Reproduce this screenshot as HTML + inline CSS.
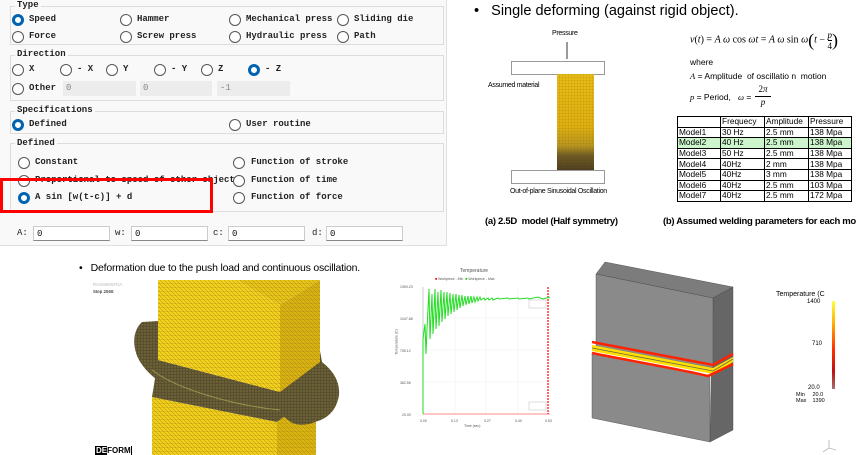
<!DOCTYPE html>
<html><head><meta charset="utf-8">
<style>
*{margin:0;padding:0;box-sizing:border-box}
body{width:856px;height:455px;position:relative;overflow:hidden;background:#fff;font-family:"Liberation Sans",sans-serif}
.a{position:absolute;white-space:nowrap}
#dlg{position:absolute;left:0;top:0;width:447px;height:246px;background:#f9f9f9;border-right:1px solid #e0e0e0;border-bottom:1px solid #e0e0e0}
.g{position:absolute;border:1px solid #dcdcdc}
.m{font-family:"Liberation Mono",monospace;font-size:9px;color:#222;position:absolute;white-space:nowrap;line-height:11px;font-weight:bold}
.lg{background:#f9f9f9;padding:0 2px}
.r{position:absolute;width:12px;height:12px;border:1px solid #555;border-radius:50%;background:#fff}
.r.s{border:3.5px solid #0063b1}
.in{position:absolute;height:15px;background:#fff;border:1px solid #ccc;border-bottom:1px solid #888;font-family:"Liberation Mono",monospace;font-size:9px;padding:2px 3px;color:#111}
.in.d{background:#ececec;border:none;color:#888}
table{border-collapse:collapse;position:absolute;left:677px;top:116px;width:175px;font-size:8.3px}
td{border:1px solid #000;height:10.6px;line-height:9px;padding:0 1px}
.eq{font-family:"Liberation Serif",serif;font-size:10px}
.fr{display:inline-block;vertical-align:middle;text-align:center;font-family:"Liberation Serif",serif;font-size:9px;line-height:10px}
.fr span{display:block}
.fr span+span{border-top:1px solid #000}
</style></head><body>
<div id="dlg">
 <div class="g" style="left:10px;top:6px;width:434px;height:39px"></div>
 <div class="m lg" style="left:15px;top:0px">Type</div>
 <div class="r s" style="left:12px;top:14px"></div><div class="m" style="left:29px;top:14px">Speed</div>
 <div class="r" style="left:120px;top:14px"></div><div class="m" style="left:137px;top:14px">Hammer</div>
 <div class="r" style="left:229px;top:14px"></div><div class="m" style="left:246px;top:14px">Mechanical press</div>
 <div class="r" style="left:337px;top:14px"></div><div class="m" style="left:354px;top:14px">Sliding die</div>
 <div class="r" style="left:12px;top:31px"></div><div class="m" style="left:29px;top:31px">Force</div>
 <div class="r" style="left:120px;top:31px"></div><div class="m" style="left:137px;top:31px">Screw press</div>
 <div class="r" style="left:229px;top:31px"></div><div class="m" style="left:246px;top:31px">Hydraulic press</div>
 <div class="r" style="left:337px;top:31px"></div><div class="m" style="left:354px;top:31px">Path</div>

 <div class="g" style="left:10px;top:55px;width:434px;height:46px"></div>
 <div class="m lg" style="left:15px;top:49px">Direction</div>
 <div class="r" style="left:12px;top:64px"></div><div class="m" style="left:29px;top:64px">X</div>
 <div class="r" style="left:60px;top:64px"></div><div class="m" style="left:77px;top:64px">- X</div>
 <div class="r" style="left:106px;top:64px"></div><div class="m" style="left:123px;top:64px">Y</div>
 <div class="r" style="left:154px;top:64px"></div><div class="m" style="left:171px;top:64px">- Y</div>
 <div class="r" style="left:201px;top:64px"></div><div class="m" style="left:218px;top:64px">Z</div>
 <div class="r s" style="left:248px;top:64px"></div><div class="m" style="left:265px;top:64px">- Z</div>
 <div class="r" style="left:12px;top:83px"></div><div class="m" style="left:29px;top:83px">Other</div>
 <div class="in d" style="left:63px;top:81px;width:73px">0</div>
 <div class="in d" style="left:140px;top:81px;width:72px">0</div>
 <div class="in d" style="left:217px;top:81px;width:73px">-1</div>

 <div class="g" style="left:10px;top:111px;width:434px;height:23px"></div>
 <div class="m lg" style="left:15px;top:105px">Specifications</div>
 <div class="r s" style="left:12px;top:119px"></div><div class="m" style="left:29px;top:119px">Defined</div>
 <div class="r" style="left:229px;top:119px"></div><div class="m" style="left:246px;top:119px">User routine</div>

 <div class="g" style="left:10px;top:143px;width:434px;height:69px"></div>
 <div class="m lg" style="left:15px;top:138px">Defined</div>
 <div class="r" style="left:18px;top:157px"></div><div class="m" style="left:35px;top:157px">Constant</div>
 <div class="r" style="left:18px;top:175px"></div><div class="m" style="left:35px;top:175px">Proportional to speed of other object</div>
 <div class="r s" style="left:18px;top:192px"></div><div class="m" style="left:35px;top:192px">A sin [w(t-c)] + d</div>
 <div class="r" style="left:233px;top:157px"></div><div class="m" style="left:251px;top:157px">Function of stroke</div>
 <div class="r" style="left:233px;top:175px"></div><div class="m" style="left:251px;top:175px">Function of time</div>
 <div class="r" style="left:233px;top:192px"></div><div class="m" style="left:251px;top:192px">Function of force</div>
 <div class="a" style="left:0;top:178px;width:213px;height:35px;border:3px solid #f00"></div>

 <div class="m" style="left:17px;top:228px;font-weight:normal">A:</div><div class="in" style="left:33px;top:226px;width:77px">0</div>
 <div class="m" style="left:115px;top:228px;font-weight:normal">w:</div><div class="in" style="left:131px;top:226px;width:77px">0</div>
 <div class="m" style="left:213px;top:228px;font-weight:normal">c:</div><div class="in" style="left:228px;top:226px;width:77px">0</div>
 <div class="m" style="left:312px;top:228px;font-weight:normal">d:</div><div class="in" style="left:326px;top:226px;width:77px">0</div>
</div>

<!-- top right -->
<div class="a" style="left:474px;top:3px;font-size:14.5px">•&nbsp;&nbsp;&nbsp;Single deforming (against rigid object).</div>
<div class="a" style="left:552px;top:30px;font-size:7px;letter-spacing:-0.3px">Pressure</div>
<div class="a" style="left:488px;top:82px;font-size:7px;letter-spacing:-0.3px">Assumed material</div>
<div class="a" style="left:510px;top:188px;font-size:7px;letter-spacing:-0.3px">Out-of-plane Sinusoidal Oscillation</div>
<svg class="a" style="left:500px;top:30px" width="120" height="160">
 <line x1="67" y1="12" x2="67" y2="29" stroke="#000" stroke-width="0.8"/>
 <rect x="11.5" y="31.5" width="93" height="13" fill="#fff" stroke="#999"/>
 <defs><linearGradient id="yg" x1="0" y1="0" x2="0" y2="1"><stop offset="0" stop-color="#e8bc14"/><stop offset="0.55" stop-color="#e0b010"/><stop offset="0.75" stop-color="#b89520"/><stop offset="0.85" stop-color="#6d5a25"/><stop offset="1" stop-color="#4a3c20"/></linearGradient>
 <pattern id="grid" width="3" height="3" patternUnits="userSpaceOnUse"><path d="M3 0V3M0 3H3" stroke="#7a6010" stroke-width="0.4" fill="none"/></pattern></defs>
 <rect x="57" y="44" width="37" height="96" fill="url(#yg)"/>
 <rect x="57" y="44" width="37" height="96" fill="url(#grid)" opacity="0.6"/>
 <rect x="11.5" y="140.5" width="93" height="13" fill="#fff" stroke="#999"/>
</svg>
<div class="a" style="left:485px;top:216px;font-size:9.5px;font-weight:bold;letter-spacing:-0.3px">(a) 2.5D&nbsp; model (Half symmetry)</div>
<div class="a" style="left:663px;top:216px;font-size:9.5px;font-weight:bold;letter-spacing:-0.3px">(b) Assumed welding parameters for each mo</div>

<div class="a eq" style="left:690px;top:27px;line-height:26px"><i>v</i>(<i>t</i>) = <i>A ω</i> cos <i>ωt</i> = <i>A ω</i> sin <i>ω</i><span style="font-size:18px;vertical-align:middle">(</span><i>t</i> − <span class="fr"><span><i>p</i></span><span>4</span></span><span style="font-size:18px;vertical-align:middle">)</span></div>
<div class="a" style="left:690px;top:57px;font-size:8.5px">where</div>
<div class="a" style="left:690px;top:71px;font-size:8.5px"><i style="font-family:'Liberation Serif'">A</i> = Amplitude&nbsp; of oscillatio n&nbsp; motion</div>
<div class="a" style="left:690px;top:92px;font-size:8.5px"><i style="font-family:'Liberation Serif'">p</i> = Period,&nbsp;&nbsp; <i style="font-family:'Liberation Serif'">ω</i> =</div>
<div class="a" style="left:755px;top:84px;font-family:'Liberation Serif',serif;font-size:9px;width:16px;text-align:center">2<i>π</i></div>
<div class="a" style="left:755px;top:96px;width:16px;border-top:1px solid #000"></div>
<div class="a" style="left:755px;top:97px;font-family:'Liberation Serif',serif;font-size:9px;width:16px;text-align:center"><i>p</i></div>
<table>
<tr><td style="width:43px"></td><td style="width:44px">Frequecy</td><td style="width:44px">Amplitude</td><td>Pressure</td></tr>
<tr><td>Model1</td><td>30 Hz</td><td>2.5 mm</td><td>138 Mpa</td></tr>
<tr style="background:#ccf5cc"><td>Model2</td><td>40 Hz</td><td>2.5 mm</td><td>138 Mpa</td></tr>
<tr><td>Model3</td><td>50 Hz</td><td>2.5 mm</td><td>138 Mpa</td></tr>
<tr><td>Model4</td><td>40Hz</td><td>2 mm</td><td>138 Mpa</td></tr>
<tr><td>Model5</td><td>40Hz</td><td>3 mm</td><td>138 Mpa</td></tr>
<tr><td>Model6</td><td>40Hz</td><td>2.5 mm</td><td>103 Mpa</td></tr>
<tr><td>Model7</td><td>40Hz</td><td>2.5 mm</td><td>172 Mpa</td></tr>
</table>

<!-- bottom -->
<div class="a" style="left:79px;top:262px;font-size:10.5px;letter-spacing:-0.2px">•&nbsp;&nbsp; Deformation due to the push load and continuous oscillation.</div>
<div class="a" style="left:93px;top:282px;font-size:4.5px;color:#bbb">RecIM605FDA</div>
<div class="a" style="left:93px;top:289px;font-size:4.5px">Step 2568</div>
<div class="a" style="left:95px;top:446px;font-size:8px;font-weight:bold;background:#000;color:#fff;padding:0 1px;line-height:9px">DE<span style="background:#fff;color:#000">FORM</span></div>
<svg class="a" style="left:0;top:0" width="856" height="455">
 <defs><pattern id="tri" width="4" height="4" patternUnits="userSpaceOnUse"><path d="M0 0L4 4M0 4H4" stroke="#8a7410" stroke-width="0.35" fill="none"/></pattern>
 <pattern id="dk" width="3" height="3" patternUnits="userSpaceOnUse"><rect width="3" height="3" fill="#5a5030"/><circle cx="1" cy="1" r="0.7" fill="#857a40"/></pattern></defs>
 <!-- lower block -->
 <polygon points="152,397 277,422 277,455 152,455" fill="#f1cd1c"/>
 <polygon points="277,422 316,390 316,455 277,455" fill="#dcb412"/>
 <polygon points="152,397 277,422 277,455 152,455" fill="url(#tri)"/>
 <polygon points="277,422 316,390 316,455 277,455" fill="url(#tri)"/>
 <!-- dark band -->
 <polygon points="158,360 280,392 318,362 316,392 277,422 152,397" fill="url(#dk)"/>
 <!-- left bulge -->
 <path d="M158,321 L142,322 C133,330 132,345 138,358 C145,372 160,385 185,395 C220,408 260,412 280,412 L280,392 C240,385 190,372 158,360 Z" fill="url(#dk)"/>
 <path d="M152,370 C175,388 230,405 280,410" stroke="#9a9050" stroke-width="1" fill="none"/>
 <!-- right bulge -->
 <path d="M275,365 L318,340 L322,362 C332,370 340,380 339,395 C337,408 330,418 315,422 C305,426 295,426 288,420 L280,414 Z" fill="url(#dk)"/>
 <!-- upper block -->
 <polygon points="158,280 237,280 280,305 280,392 158,360" fill="#f3cf1e"/>
 <polygon points="237,280 320,280 280,305" fill="#e9c418"/>
 <polygon points="280,305 320,280 320,362 280,392" fill="#dab214"/>
 <polygon points="158,280 237,280 280,305 280,392 158,360" fill="url(#tri)"/>
 <polygon points="280,305 320,280 320,362 280,392" fill="url(#tri)"/>
 <polygon points="237,280 320,280 280,305" fill="url(#tri)"/>
</svg>

<!-- chart -->
<div class="a" style="left:460px;top:268px;font-size:5px;color:#555">Temperature</div>
<div class="a" style="left:435px;top:277px;font-size:3.5px;color:#555"><span style="color:#e00">■</span> Workpiece - Min&nbsp; <span style="color:#0c0">■</span> Workpiece - Max</div>
<svg class="a" style="left:398px;top:284px" width="155" height="145">
 <g font-size="3.5" fill="#555" font-family="Liberation Sans">
 <text x="2" y="4">1390.23</text><text x="2" y="36">1047.68</text><text x="2" y="68">705.12</text><text x="2" y="100">362.56</text><text x="4" y="132">20.00</text>
 <text x="22" y="138">0.00</text><text x="53" y="138">0.13</text><text x="86" y="138">0.27</text><text x="117" y="138">0.40</text><text x="147" y="138">0.53</text>
 <text x="66" y="143">Time (sec)</text></g>
 <g stroke="#eee" stroke-width="0.5"><line x1="57" y1="3" x2="57" y2="130"/><line x1="88" y1="3" x2="88" y2="130"/><line x1="120" y1="3" x2="120" y2="130"/><line x1="25" y1="34" x2="152" y2="34"/><line x1="25" y1="66" x2="152" y2="66"/><line x1="25" y1="98" x2="152" y2="98"/></g>
 <line x1="25" y1="3" x2="25" y2="130" stroke="#999" stroke-width="0.5"/>
 <line x1="25" y1="130" x2="152" y2="130" stroke="#f88" stroke-width="1"/>
 <line x1="150" y1="3" x2="150" y2="130" stroke="#f33" stroke-width="1.5" stroke-dasharray="2,1"/>
 <path d="M25,130 L25,55 L27,40 L28,70 L29,45 L31,5 L32,55 L34,10 L35,50 L37,5 L38,45 L40,8 L41,42 L43,6 L44,38 L46,8 L47,35 L49,8 L50,32 L52,9 L53,30 L55,10 L56,28 L58,10 L59,26 L61,11 L62,24 L64,11 L65,22 L67,12 L68,21 L70,12 L71,20 L73,12 L74,19 L76,13 L77,18 L79,13 L80,17 L82,13 L83,16 L86,14 L87,16 L90,14 L91,16 L94,14 L95,16 L100,14 L101,15 L110,14 L111,15 L120,14 L121,15 L130,14 L131,15 L140,13 L145,15 L152,13" stroke="#2d2" stroke-width="1" fill="none"/>
 <rect x="131" y="16" width="17" height="8" fill="#fff" stroke="#aaa" stroke-width="0.4"/>
 <rect x="131" y="118" width="17" height="8" fill="#fff" stroke="#aaa" stroke-width="0.4"/>
</svg>
<div class="a" style="left:384px;top:340px;font-size:3.5px;color:#555;transform:rotate(-90deg)">Temperature (C)</div>

<!-- gray block -->
<svg class="a" style="left:585px;top:258px" width="160" height="192">
 <polygon points="11,16 20,4 148,29 128,40" fill="#7c7c7c" stroke="#444" stroke-width="0.4"/>
 <polygon points="128,40 148,29 148,172 125,184" fill="#666" stroke="#444" stroke-width="0.4"/>
 <polygon points="11,16 128,40 128,110 11,88" fill="#8a8a8a" stroke="#444" stroke-width="0.4"/>
 <polygon points="7,95 125,118 125,184 7,160" fill="#8a8a8a" stroke="#444" stroke-width="0.4"/>
 <path d="M7,87 L128,110 L148,99 L148,104 L128,116 L7,93 Z" fill="#ffe000"/>
 <path d="M7,84 L128,107 L148,96" stroke="#f20" stroke-width="2.5" fill="none"/>
 <path d="M7,95 C30,100 100,112 123,118 L148,106" stroke="#f20" stroke-width="2.5" fill="none"/>
 <path d="M7,90 L128,113 L148,101" stroke="#665" stroke-width="0.8" fill="none"/>
</svg>
<div class="a" style="left:776px;top:291px;font-size:7px">Temperature (C</div>
<div class="a" style="left:807px;top:299px;font-size:6px">1400</div>
<div class="a" style="left:812px;top:341px;font-size:6px">710</div>
<div class="a" style="left:808px;top:385px;font-size:6px">20.0</div>
<div class="a" style="left:796px;top:392px;font-size:5.5px;line-height:6px">Min&nbsp;&nbsp;&nbsp;&nbsp; 20.0<br>Max&nbsp;&nbsp;&nbsp; 1390</div>
<div class="a" style="left:832px;top:301px;width:3px;height:88px;background:linear-gradient(#ffff40,#ffb000 25%,#ff3000 55%,#c01010 80%,#a07070)"></div>
<svg class="a" style="left:818px;top:438px" width="30" height="17"><path d="M11,10V2M11,10L18,12M11,10L5,14" stroke="#999" stroke-width="0.6" fill="none"/></svg>
</body></html>
